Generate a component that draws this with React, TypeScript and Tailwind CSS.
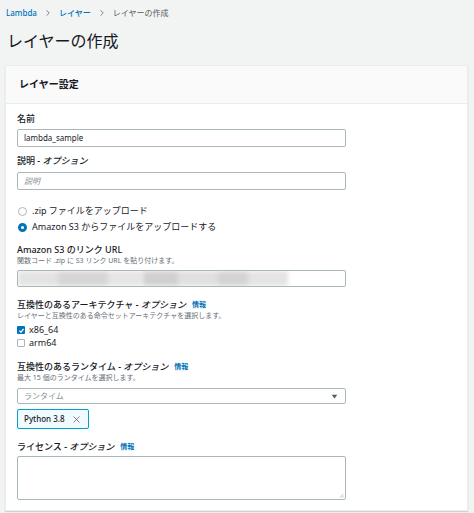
import { ChevronRight, X } from 'lucide-react';

// ─── Small pieces ────────────────────────────────────────────────────────────

function Label({ text, optional, info }: { text: string; optional?: boolean; info?: boolean }) {
  return (
    <div className="h-[12px] leading-[12px] text-[9px] font-medium text-[#16191f] flex items-center gap-[6px]">
      <span>
        {text}
        {optional && <span className="italic"> - オプション</span>}
      </span>
      {info && <span className="text-[7px] font-bold text-[#0073bb]">情報</span>}
    </div>
  );
}

function Helper({ text }: { text: string }) {
  return <div className="h-[10px] leading-[10px] text-[7px] text-[#687078]">{text}</div>;
}

function Radio({ checked, label }: { checked?: boolean; label: string }) {
  return (
    <div className="h-[14px] flex items-center gap-[5px] pl-[1px]">
      <span
        className={
          checked
            ? 'w-[9px] h-[9px] rounded-full border-[3px] border-[#0073bb] bg-white'
            : 'w-[9px] h-[9px] rounded-full border border-[#aab7b8] bg-white'
        }
      />
      <span className="text-[9px] text-[#16191f]">{label}</span>
    </div>
  );
}

function Checkbox({ checked, label }: { checked?: boolean; label: string }) {
  return (
    <div className="h-[12px] flex items-center gap-[4px]">
      {checked ? (
        <span className="w-[8px] h-[8px] rounded-[1px] bg-[#0073bb] flex items-center justify-center">
          <svg viewBox="0 0 10 10" className="w-[7px] h-[7px]">
            <path d="M2 5.2 L4.2 7.4 L8 2.6" fill="none" stroke="white" strokeWidth="1.8" />
          </svg>
        </span>
      ) : (
        <span className="w-[8px] h-[8px] rounded-[1px] border border-[#aab7b8] bg-white" />
      )}
      <span className="text-[9px] text-[#16191f]">{label}</span>
    </div>
  );
}

// ─── Page ────────────────────────────────────────────────────────────────────

export default function App() {
  return (
    <div className="w-[474px] h-[513px] overflow-hidden bg-[#f2f3f3] font-['Noto_Sans','Noto_Sans_CJK_JP',sans-serif]">
      {/* Breadcrumb */}
      <div className="h-[21px] pl-[6px] pt-[4px] flex items-center gap-[6px] text-[8px]">
        <span className="text-[#0073bb] font-medium">Lambda</span>
        <ChevronRight className="w-[10px] h-[10px] text-[#687078]" strokeWidth={2} />
        <span className="text-[#0073bb] font-medium">レイヤー</span>
        <ChevronRight className="w-[10px] h-[10px] text-[#687078]" strokeWidth={2} />
        <span className="text-[#545b64]">レイヤーの作成</span>
      </div>

      {/* Title */}
      <h1 className="h-[44px] pl-[7px] pt-[6px] text-[16px] leading-[28px] text-[#16191f]">レイヤーの作成</h1>

      {/* Card */}
      <div className="ml-[5px] mr-[6px] bg-white border border-[#eaeded] shadow-[0_1px_1px_rgba(0,28,36,0.15)]">
        <div className="h-[38px] bg-[#fafafa] border-b border-[#eaeded] pl-[13px] flex items-center text-[10px] font-bold text-[#16191f]">
          レイヤー設定
        </div>

        <div className="px-[11px] pt-[9px] pb-[10px]">
          <Label text="名前" />
          <div className="mt-[4px] w-[329px] h-[18px] border border-[#aab7b8] rounded-[2px] px-[6px] flex items-center text-[8px] text-[#16191f]">
            lambda_sample
          </div>

          <div className="mt-[8px]">
            <Label text="説明" optional />
          </div>
          <div className="mt-[5px] w-[329px] h-[18px] border border-[#aab7b8] rounded-[2px] px-[6px] flex items-center text-[8px] italic text-[#879596]">
            説明
          </div>

          <div className="mt-[14px]">
            <Radio label=".zip ファイルをアップロード" />
          </div>
          <div className="mt-[2px]">
            <Radio checked label="Amazon S3 からファイルをアップロードする" />
          </div>

          <div className="mt-[10px]">
            <Label text="Amazon S3 のリンク URL" />
          </div>
          <Helper text="関数コード .zip に S3 リンク URL を貼り付けます。" />
          <div className="mt-[4px] w-[329px] h-[17px] border border-[#aab7b8] rounded-[2px] overflow-hidden flex items-center">
            <div className="flex h-full w-[270px] blur-[2px]">
              <div className="w-[40px] bg-[#e3e3e3]" />
              <div className="w-[50px] bg-[#d6d6d6]" />
              <div className="w-[36px] bg-[#e6e6e6]" />
              <div className="w-[34px] bg-[#d0d0d0]" />
              <div className="w-[40px] bg-[#e0e0e0]" />
              <div className="w-[30px] bg-[#d4d4d4]" />
              <div className="w-[40px] bg-[#e4e4e4]" />
            </div>
          </div>

          <div className="mt-[12px]">
            <Label text="互換性のあるアーキテクチャ" optional info />
          </div>
          <Helper text="レイヤーと互換性のある命令セットアーキテクチャを選択します。" />
          <div className="mt-[3px]">
            <Checkbox checked label="x86_64" />
          </div>
          <div className="mt-[1px]">
            <Checkbox label="arm64" />
          </div>

          <div className="mt-[12px]">
            <Label text="互換性のあるランタイム" optional info />
          </div>
          <Helper text="最大 15 個のランタイムを選択します。" />
          <div className="mt-[5px] w-[329px] h-[16px] border border-[#aab7b8] rounded-[2px] pl-[6px] pr-[7px] flex items-center justify-between">
            <span className="text-[8px] text-[#879596]">ランタイム</span>
            <svg viewBox="0 0 10 10" className="w-[7px] h-[7px]">
              <path d="M1 2.5 H9 L5 8 Z" fill="#545b64" />
            </svg>
          </div>

          <div className="mt-[5px] w-fit h-[20px] bg-[#f1faff] border border-[#00a1c9] rounded-[2px] px-[6px] flex items-center gap-[6px]">
            <span className="text-[8px] font-medium text-[#16191f]">Python 3.8</span>
            <X className="w-[11px] h-[11px] text-[#545b64]" strokeWidth={1.6} />
          </div>

          <div className="mt-[12px]">
            <Label text="ライセンス" optional info />
          </div>
          <div className="mt-[3px] w-[329px] h-[44px] border border-[#aab7b8] rounded-[2px] relative">
            <svg viewBox="0 0 6 6" className="absolute right-[1px] bottom-[1px] w-[5px] h-[5px]">
              <path d="M5.5 1 L1 5.5 M5.5 3.5 L3.5 5.5" stroke="#999" strokeWidth="0.7" />
            </svg>
          </div>
        </div>
      </div>
    </div>
  );
}
